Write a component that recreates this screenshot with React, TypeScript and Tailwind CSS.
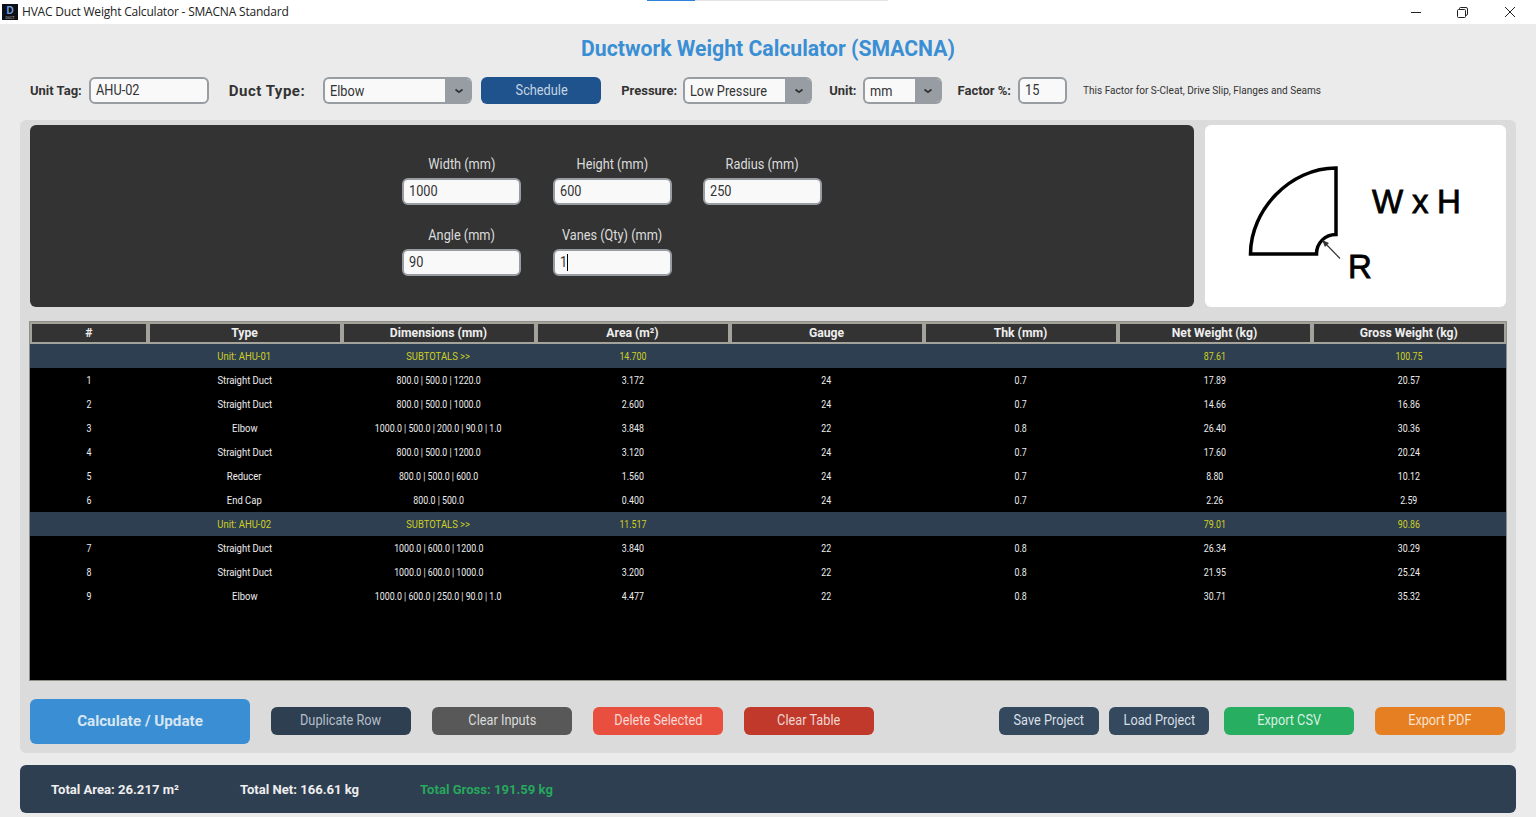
import React from 'react'

const columns = ['#', 'Type', 'Dimensions (mm)', 'Area (m²)', 'Gauge', 'Thk (mm)', 'Net Weight (kg)', 'Gross Weight (kg)']

const rows = [
  { sub: true, cells: ['', 'Unit: AHU-01', 'SUBTOTALS >>', '14.700', '', '', '87.61', '100.75'] },
  { cells: ['1', 'Straight Duct', '800.0 | 500.0 | 1220.0', '3.172', '24', '0.7', '17.89', '20.57'] },
  { cells: ['2', 'Straight Duct', '800.0 | 500.0 | 1000.0', '2.600', '24', '0.7', '14.66', '16.86'] },
  { cells: ['3', 'Elbow', '1000.0 | 500.0 | 200.0 | 90.0 | 1.0', '3.848', '22', '0.8', '26.40', '30.36'] },
  { cells: ['4', 'Straight Duct', '800.0 | 500.0 | 1200.0', '3.120', '24', '0.7', '17.60', '20.24'] },
  { cells: ['5', 'Reducer', '800.0 | 500.0 | 600.0', '1.560', '24', '0.7', '8.80', '10.12'] },
  { cells: ['6', 'End Cap', '800.0 | 500.0', '0.400', '24', '0.7', '2.26', '2.59'] },
  { sub: true, cells: ['', 'Unit: AHU-02', 'SUBTOTALS >>', '11.517', '', '', '79.01', '90.86'] },
  { cells: ['7', 'Straight Duct', '1000.0 | 600.0 | 1200.0', '3.840', '22', '0.8', '26.34', '30.29'] },
  { cells: ['8', 'Straight Duct', '1000.0 | 600.0 | 1000.0', '3.200', '22', '0.8', '21.95', '25.24'] },
  { cells: ['9', 'Elbow', '1000.0 | 600.0 | 250.0 | 90.0 | 1.0', '4.477', '22', '0.8', '30.71', '35.32'] },
]

const gridCols = 'grid grid-cols-[117.5px_194px_194px_194px_194px_194px_194px_194.5px]'

// the table text is narrower than any installed font, so squeeze it sideways
const cellSqueeze = (v: string, j: number) => {
  if (j === 1 || v.startsWith('SUB')) return 'scale-x-[0.86]'
  return 'scale-x-[0.8]'
}

const Combo = ({ value, width }: { value: string; width: string }) => (
  <div className={`flex h-[27px] ${width} overflow-hidden rounded-[6px] border-2 border-r-0 border-[#979da2] bg-[#f9f9fa]`}>
    <div className="flex flex-1 items-center pl-[5px] pt-[1px] text-[14px] text-[#333]">
      <span className="inline-block origin-left scale-x-[0.91] whitespace-nowrap">{value}</span>
    </div>
    <div className="flex w-[27px] items-center justify-center bg-[#979da2]">
      <svg width="10" height="6" viewBox="0 0 10 6" fill="none" stroke="#333" strokeWidth="1.8">
        <path d="M1.5 1.5 L5 4.2 L8.5 1.5" />
      </svg>
    </div>
  </div>
)

const TextBox = ({ value, width }: { value: string; width: string }) => (
  <div className={`flex h-[27px] ${width} items-center rounded-[6px] border-2 border-[#979da2] bg-[#f9f9fa] pl-[5px] text-[14px] text-[#333]`}>
    <span className="inline-block origin-left scale-x-[0.91]">{value}</span>
  </div>
)

const Field = ({ label, value, caret }: { label: string; value: string; caret?: boolean }) => (
  <div className="flex w-[119px] flex-col items-center">
    <div className="mb-[4px] h-[20px] scale-x-[0.91] whitespace-nowrap text-[14px] leading-[20px] text-[#dcdcdc]">{label}</div>
    <div className="flex h-[27px] w-full items-center rounded-[6px] border-2 border-[#979da2] bg-[#f9f9fa] pl-[5px] text-[14px] text-[#333]">
      <span className="inline-block origin-left scale-x-[0.91]">{value}</span>
      {caret && <span className="h-[17px] w-[1px] bg-black" />}
    </div>
  </div>
)

const ActionButton = ({ label, width, color, ml }: { label: string; width: string; color: string; ml: string }) => (
  <div className={`mt-[8px] flex h-[28px] ${width} ${color} ${ml} items-center justify-center rounded-[6px] pb-[1px] text-[14px]`}>
    <span className="inline-block scale-x-[0.91] whitespace-nowrap">{label}</span>
  </div>
)

export default function App() {
  return (
    <div className="relative flex h-[817px] w-[1536px] flex-col overflow-hidden bg-[#ebebeb] font-['Roboto',sans-serif]">
      {/* capture artifact at the very top of the window */}
      <div className="absolute left-[647px] top-0 h-[1px] w-[48px] bg-[#2f80d8]" />
      <div className="absolute left-[695px] top-0 h-[1px] w-[193px] bg-[#e4e4e4]" />

      <div className="flex h-[24px] items-center bg-white pl-[2px] pr-[20px] font-['Open_Sans',sans-serif] text-[12px] tracking-[-0.2px] text-[#222]">
        <svg className="mr-[4px]" width="16" height="16" viewBox="0 0 16 16">
          <rect width="16" height="16" fill="#0c0f16" />
          <text x="8" y="10" textAnchor="middle" fontFamily="Liberation Sans" fontWeight="700" fontSize="10" fill="#6f9fe0">D</text>
          <text x="8" y="14.5" textAnchor="middle" fontFamily="Liberation Sans" fontSize="3.5" fill="#c8c8c8">DUCT</text>
        </svg>
        <span>HVAC Duct Weight Calculator - SMACNA Standard</span>
        <div className="ml-auto flex items-center gap-[36px]">
          <svg width="10" height="10" viewBox="0 0 10 10" stroke="#222" fill="none"><path d="M0 5.5 H10" /></svg>
          <svg width="11" height="11" viewBox="0 0 11 11" stroke="#222" fill="none">
            <rect x="0.5" y="2.5" width="8" height="8" rx="1" />
            <path d="M2.5 2.5 V1.5 Q2.5 0.5 3.5 0.5 H9 Q10.5 0.5 10.5 2 V7 Q10.5 8.5 8.5 8.5" />
          </svg>
          <svg width="12" height="12" viewBox="0 0 12 12" stroke="#222" fill="none"><path d="M1 1 L11 11 M11 1 L1 11" /></svg>
        </div>
      </div>

      <h1 className="mt-[10px] h-[30px] text-center text-[21.2px] font-bold leading-[30px] text-[#3a8fd4]">
        Ductwork Weight Calculator (SMACNA)
      </h1>

      <div className="mt-[13px] flex h-[27px] items-center pl-[30px] text-[#333]">
        <span className="mr-[7px] text-[13px] font-bold">Unit Tag:</span>
        <TextBox value="AHU-02" width="w-[120px]" />
        <span className="ml-[20px] mr-[18px] mt-[1px] text-[15px] font-bold tracking-[0.5px]">Duct Type:</span>
        <Combo value="Elbow" width="w-[149px]" />
        <div className="ml-[9px] mr-[20px] flex h-[27px] w-[120px] items-center justify-center rounded-[6px] bg-[#1f538d] text-[14px] text-[#c6d4e2]">
          <span className="inline-block scale-x-[0.91]">Schedule</span>
        </div>
        <span className="mr-[6px] text-[13px] font-bold">Pressure:</span>
        <Combo value="Low Pressure" width="w-[129px]" />
        <span className="ml-[17px] mr-[6px] text-[13px] font-bold">Unit:</span>
        <Combo value="mm" width="w-[79px]" />
        <span className="ml-[16px] mr-[7px] text-[13px] font-bold">Factor %:</span>
        <TextBox value="15" width="w-[49px]" />
        <span className="ml-[16px] mt-[1px] inline-block origin-left scale-x-[0.915] whitespace-nowrap text-[11px] text-[#333]">
          This Factor for S-Cleat, Drive Slip, Flanges and Seams
        </span>
      </div>

      <div className="mx-[20px] mt-[16px] h-[633px] rounded-[6px] bg-[#dbdbdb] px-[10px] pt-[5px]">
        <div className="flex h-[182px] gap-[11px]">
          <div className="w-[1164px] rounded-[6px] bg-[#333] pl-[372px] pt-[29px]">
            <div className="grid grid-cols-[119px_119px_119px] gap-x-[31.5px] gap-y-[20px]">
              <Field label="Width (mm)" value="1000" />
              <Field label="Height (mm)" value="600" />
              <Field label="Radius (mm)" value="250" />
              <Field label="Angle (mm)" value="90" />
              <Field label="Vanes (Qty) (mm)" value="1" caret />
            </div>
          </div>
          <div className="w-[301px] rounded-[6px] bg-white">
            <svg width="301" height="182" viewBox="0 0 301 182">
              <path
                d="M45.5 129 C45.5 85 85 43 131 43 V109.5 C120 109.5 111.5 118 111.5 129 Z"
                fill="none"
                stroke="#000"
                strokeWidth="3.5"
              />
              <path d="M135 133.5 L118 116" stroke="#333" strokeWidth="1.2" />
              <path d="M117 115 L124 118 L120 122 Z" fill="#333" />
              <g fontFamily="Liberation Sans" fontSize="33" fill="#000" stroke="#000" strokeWidth="0.8">
                <text x="167" y="87.5">W</text>
                <text x="207" y="87.5">x</text>
                <text x="232" y="87.5">H</text>
                <text x="143" y="153">R</text>
              </g>
            </svg>
          </div>
        </div>

        <div className="ml-[-1px] mt-[14px] h-[360px] w-[1478px] border border-[#8f8f88] bg-black">
          <div className={gridCols}>
            {columns.map(c => (
              <div
                key={c}
                className="flex h-[22px] items-center justify-center border-2 border-[#a3a39c] bg-[#333] text-[12.2px] font-bold text-[#eee]"
              >
                {c}
              </div>
            ))}
          </div>
          {rows.map((r, i) => (
            <div key={i} className={`${gridCols} h-[24px] ${r.sub ? 'bg-[#2e3f52] text-[#d0d020]' : 'text-[#eee]'}`}>
              {r.cells.map((v, j) => (
                <div key={j} className="flex items-center justify-center pt-[2px] text-[11px]">
                  <span className={`inline-block whitespace-nowrap ${cellSqueeze(v, j)}`}>{v}</span>
                </div>
              ))}
            </div>
          ))}
        </div>

        <div className="mt-[18px] flex items-start">
          <div className="flex h-[45px] w-[220px] items-center justify-center rounded-[6px] bg-[#3a8fd4] text-[15.2px] font-bold text-[#d8e6f2]">
            Calculate / Update
          </div>
          <ActionButton label="Duplicate Row" width="w-[140px]" color="bg-[#2e3f52] text-[#b5bfc9]" ml="ml-[21px]" />
          <ActionButton label="Clear Inputs" width="w-[140px]" color="bg-[#585858] text-[#dcdcdc]" ml="ml-[21px]" />
          <ActionButton label="Delete Selected" width="w-[130px]" color="bg-[#e94f3f] text-[#f6d8d4]" ml="ml-[21px]" />
          <ActionButton label="Clear Table" width="w-[130px]" color="bg-[#c0392b] text-[#f0d5d2]" ml="ml-[21px]" />
          <ActionButton label="Save Project" width="w-[100px]" color="bg-[#34495e] text-[#d8dfe5]" ml="ml-[125px]" />
          <ActionButton label="Load Project" width="w-[100px]" color="bg-[#34495e] text-[#d8dfe5]" ml="ml-[10px]" />
          <ActionButton label="Export CSV" width="w-[130px]" color="bg-[#27ae60] text-[#d6f0e0]" ml="ml-[15px]" />
          <ActionButton label="Export PDF" width="w-[130px]" color="bg-[#e67e22] text-[#f9e2cd]" ml="ml-[21px]" />
        </div>
      </div>

      <div className="mx-[20px] mt-[12px] flex h-[48px] items-center rounded-[6px] bg-[#2e3f52] pl-[31px] pt-[1px] text-[13.1px] font-bold">
        <span className="text-[#eee]">Total Area: 26.217 m²</span>
        <span className="ml-[61px] text-[#eee]">Total Net: 166.61 kg</span>
        <span className="ml-[61px] text-[#27a85c]">Total Gross: 191.59 kg</span>
      </div>
    </div>
  )
}
